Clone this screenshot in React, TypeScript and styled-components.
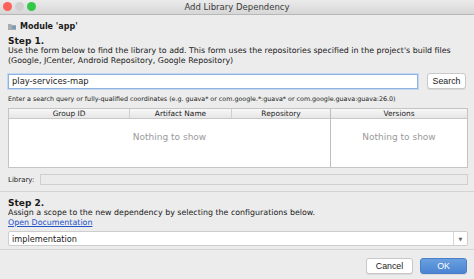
import styled, { createGlobalStyle } from "styled-components";

const Global = createGlobalStyle`
  html, body {
    margin: 0;
    padding: 0;
    background: #ececec;
  }
  body {
    font-family: "DejaVu Sans", "Liberation Sans", sans-serif;
    font-size: 8px;
    color: #1a1a1a;
  }
`;

const Window = styled.div`
  width: 474px;
  height: 279px;
  background: #ececec;
  display: flex;
  flex-direction: column;
  overflow: hidden;
`;

const TitleBar = styled.div`
  height: 14px;
  flex: none;
  display: flex;
  align-items: center;
  justify-content: center;
  position: relative;
  background: linear-gradient(#ebebeb, #d6d6d6);
  border-bottom: 1px solid #b8b8b8;
  font-size: 8.5px;
  color: #3a3a3a;
`;

const Lights = styled.div`
  position: absolute;
  left: 3px;
  top: 2px;
  display: flex;
  gap: 3px;
`;

const Light = styled.span<{ $c: string }>`
  width: 9px;
  height: 9px;
  border-radius: 50%;
  background: ${({ $c }) => $c};
`;

const Body = styled.div`
  flex: 1;
  display: flex;
  flex-direction: column;
  padding: 0 8px 0 8px;
`;

const ModuleRow = styled.div`
  display: flex;
  align-items: center;
  gap: 4px;
  height: 12px;
  margin-top: 5px;
  font-weight: bold;
  font-size: 8px;
`;

const StepTitle = styled.div<{ $mt: number }>`
  font-weight: bold;
  font-size: 9px;
  line-height: 10px;
  margin-top: ${({ $mt }) => $mt}px;
`;

const Para = styled.div`
  font-size: 7.9px;
  line-height: 10px;
  white-space: nowrap;
`;

const SearchRow = styled.div`
  display: flex;
  align-items: center;
  gap: 9px;
  margin-top: 7px;
`;

const TextInput = styled.div`
  flex: 1;
  height: 13px;
  background: #fff;
  border: 1px solid #8fb3e0;
  box-shadow: 0 0 0 1px #c4d8f2;
  display: flex;
  align-items: center;
  padding-left: 3px;
  font-size: 8.4px;
`;

const Button = styled.div<{ $primary?: boolean; $w: number }>`
  width: ${({ $w }) => $w}px;
  height: 14px;
  border-radius: 3px;
  display: flex;
  align-items: center;
  justify-content: center;
  font-family: "Liberation Sans", sans-serif;
  font-size: 8.8px;
  background: ${({ $primary }) =>
    $primary ? "linear-gradient(#6aa0e0, #4a84d2)" : "#fff"};
  color: ${({ $primary }) => ($primary ? "#fff" : "#222")};
  border: 1px solid ${({ $primary }) => ($primary ? "#4a7fc8" : "#c8c8c8")};
  box-shadow: 0 1px 0 rgba(0, 0, 0, 0.08);
`;

const Hint = styled.div`
  font-size: 6.35px;
  line-height: 9px;
  margin-top: 5px;
  white-space: nowrap;
`;

const Tables = styled.div`
  display: flex;
  height: 58px;
  margin-top: 5px;
  margin-right: -2px;
  border: 1px solid #c4c4c4;
  background: #fff;
`;

const Table = styled.div<{ $w: number }>`
  width: ${({ $w }) => $w}px;
  display: flex;
  flex-direction: column;
  border-right: 1px solid #bdbdbd;
  &:last-child {
    border-right: none;
    flex: 1;
  }
`;

const HeaderRow = styled.div`
  display: flex;
  height: 9px;
  background: linear-gradient(#f7f7f7, #e6e6e6);
  border-bottom: 1px solid #c8c8c8;
`;

const HeaderCell = styled.div<{ $w?: number }>`
  width: ${({ $w }) => ($w ? `${$w}px` : "auto")};
  flex: ${({ $w }) => ($w ? "none" : 1)};
  text-align: center;
  font-size: 7.4px;
  line-height: 9px;
  border-right: 1px solid #d0d0d0;
  &:last-child {
    border-right: none;
  }
`;

const Empty = styled.div`
  flex: 1;
  display: flex;
  justify-content: center;
  padding-top: 13px;
  color: #9a9a9a;
  font-size: 9px;
`;

const LibraryRow = styled.div`
  display: flex;
  align-items: center;
  gap: 6px;
  margin-top: 6px;
  margin-right: -2px;
  font-size: 7px;
`;

const LibraryField = styled.div`
  flex: 1;
  height: 9px;
  background: #ebebeb;
  border: 1px solid #cfcfcf;
`;

const Separator = styled.div<{ $mt: number }>`
  height: 1px;
  background: #d4d4d4;
  margin: ${({ $mt }) => $mt}px -8px 0;
`;

const DocLink = styled.a`
  color: #2152c8;
  text-decoration: underline;
  font-size: 7.9px;
  line-height: 10px;
  width: max-content;
`;

const Select = styled.div`
  display: flex;
  height: 13px;
  margin-top: 3px;
  margin-right: -2px;
  background: #fff;
  border: 1px solid #cdcdcd;
  border-radius: 2px;
  font-size: 8.2px;
`;

const SelectValue = styled.div`
  flex: 1;
  display: flex;
  align-items: center;
  padding-left: 3px;
`;

const SelectArrow = styled.div`
  width: 13px;
  border-left: 1px solid #d6d6d6;
  display: flex;
  align-items: center;
  justify-content: center;
  color: #666;
  font-size: 5px;
`;

const Footer = styled.div`
  display: flex;
  justify-content: flex-end;
  gap: 7px;
  padding-top: 8px;
  margin-right: -1px;
`;

const FolderIcon = () => (
  <svg width="8" height="7" viewBox="0 0 8 7">
    <path d="M0 1h3l1 1h4v5H0z" fill="#a9acb0" />
    <rect x="4" y="3" width="4" height="3" fill="#7f9ab8" />
  </svg>
);

export default function App() {
  return (
    <>
      <Global />
      <Window>
        <TitleBar>
          <Lights>
            <Light $c="#fc605b" />
            <Light $c="#d0d0d0" />
            <Light $c="#34c84a" />
          </Lights>
          Add Library Dependency
        </TitleBar>
        <Body>
          <ModuleRow>
            <FolderIcon />
            Module 'app'
          </ModuleRow>
          <StepTitle $mt={4}>Step 1.</StepTitle>
          <Para>
            Use the form below to find the library to add. This form uses the
            repositories specified in the project's build files
          </Para>
          <Para>(Google, JCenter, Android Repository, Google Repository)</Para>
          <SearchRow>
            <TextInput>play-services-map</TextInput>
            <Button $w={37}>Search</Button>
          </SearchRow>
          <Hint>
            Enter a search query or fully-qualified coordinates (e.g. guava* or
            com.google.*:guava* or com.google.guava:guava:26.0)
          </Hint>
          <Tables>
            <Table $w={321}>
              <HeaderRow>
                <HeaderCell $w={120}>Group ID</HeaderCell>
                <HeaderCell $w={101}>Artifact Name</HeaderCell>
                <HeaderCell>Repository</HeaderCell>
              </HeaderRow>
              <Empty>Nothing to show</Empty>
            </Table>
            <Table $w={138}>
              <HeaderRow>
                <HeaderCell>Versions</HeaderCell>
              </HeaderRow>
              <Empty>Nothing to show</Empty>
            </Table>
          </Tables>
          <LibraryRow>
            Library:
            <LibraryField />
          </LibraryRow>
          <Separator $mt={6} />
          <StepTitle $mt={6}>Step 2.</StepTitle>
          <Para>
            Assign a scope to the new dependency by selecting the configurations
            below.
          </Para>
          <DocLink href="#">Open Documentation</DocLink>
          <Select>
            <SelectValue>implementation</SelectValue>
            <SelectArrow>▼</SelectArrow>
          </Select>
          <Separator $mt={3} />
          <Footer>
            <Button $w={45}>Cancel</Button>
            <Button $w={45} $primary>
              OK
            </Button>
          </Footer>
        </Body>
      </Window>
    </>
  );
}
